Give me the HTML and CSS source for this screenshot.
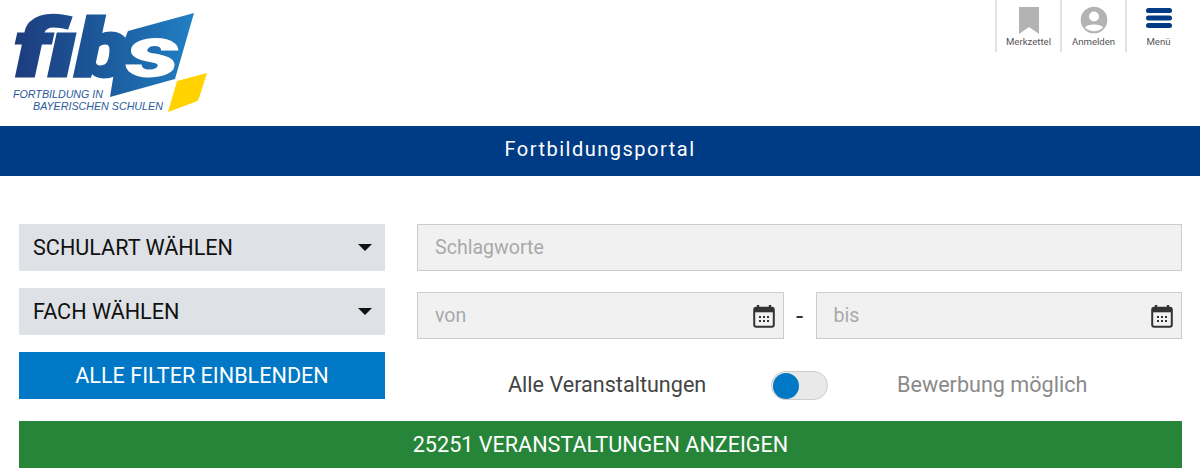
FILE: index.html
```html
<!DOCTYPE html>
<html lang="de">
<head>
    <meta charset="UTF-8">
    <meta name="viewport" content="width=device-width, initial-scale=1.0">
    <title>Fortbildungsportal</title>
    <link rel="stylesheet" href="styles.css">
</head>
<body>
    <header class="header">
        <a class="logo" href="#">
            <svg class="logo-mark" width="210" height="126" viewBox="0 0 210 126">
                <defs>
                    <linearGradient id="logo-blue" gradientUnits="userSpaceOnUse" x1="15" y1="0" x2="194" y2="0">
                        <stop offset="0" stop-color="#1d3c7e"/>
                        <stop offset="0.5" stop-color="#1c5a9c"/>
                        <stop offset="1" stop-color="#2180c4"/>
                    </linearGradient>
                </defs>
                <path d="M128 31 194 13 175 79 110 97 116 60Z" fill="url(#logo-blue)"/>
                <path d="M177 81 207 73 199 98Q198 101 195 102L168 112Z" fill="#ffd200"/>
                <text class="logo-letters" x="14" y="76" textLength="116" lengthAdjust="spacingAndGlyphs" fill="url(#logo-blue)" stroke="url(#logo-blue)">fib</text>
                <text class="logo-s" x="126" y="77" textLength="54" lengthAdjust="spacingAndGlyphs">s</text>
                <text class="logo-tag" x="13" y="98" fill="#2a5a9a">FORTBILDUNG IN</text>
                <text class="logo-tag" x="33" y="110" fill="#2a5a9a">BAYERISCHEN SCHULEN</text>
            </svg>
        </a>
        <nav class="tools">
            <a class="tool" href="#">
                <svg width="22" height="28" viewBox="0 0 22 28"><path d="M1 2H21V29L11 22 1 29Z" fill="#b3b3b3"/></svg>
                <span>Merkzettel</span>
            </a>
            <a class="tool" href="#">
                <svg width="28" height="28" viewBox="0 0 28 28">
                    <circle cx="14" cy="15" r="13.3" fill="#b3b3b3"/>
                    <circle cx="14" cy="11.5" r="5" fill="#fff"/>
                    <path d="M5 22.5C7 18.5 21 18.5 23 22.5 18 27.5 10 27.5 5 22.5Z" fill="#fff"/>
                </svg>
                <span>Anmelden</span>
            </a>
            <a class="tool tool-menu" href="#">
                <svg width="28" height="28" viewBox="0 0 28 28">
                    <rect x="1" y="3" width="26" height="5" rx="2.5" fill="#003c85"/>
                    <rect x="1" y="10.5" width="26" height="5" rx="2.5" fill="#003c85"/>
                    <rect x="1" y="18" width="26" height="5" rx="2.5" fill="#003c85"/>
                </svg>
                <span>Menü</span>
            </a>
        </nav>
    </header>

    <div class="title-bar">Fortbildungsportal</div>

    <main class="search">
        <div class="filters">
            <div class="select"><span>SCHULART WÄHLEN</span><i class="caret"></i></div>
            <div class="select"><span>FACH WÄHLEN</span><i class="caret"></i></div>
            <button class="btn btn-blue">ALLE FILTER EINBLENDEN</button>
        </div>
        <div class="fields">
            <div class="field">Schlagworte</div>
            <div class="dates">
                <div class="field field-date">von
                    <svg class="cal" width="22" height="24" viewBox="0 0 22 24">
                        <path d="M5 1v4M17 1v4" stroke="#333" stroke-width="2.4"/>
                        <rect x="1.2" y="3.7" width="19.6" height="19" rx="2" fill="none" stroke="#333" stroke-width="2"/>
                        <rect x="1.2" y="3.7" width="19.6" height="4.6" fill="#333"/>
                        <path d="M6 12h2v2H6zM10 12h2v2h-2zM14 12h2v2h-2zM6 16h2v2H6zM10 16h2v2h-2zM14 16h2v2h-2z" fill="#333"/>
                    </svg>
                </div>
                <span class="dash">-</span>
                <div class="field field-date">bis
                    <svg class="cal" width="22" height="24" viewBox="0 0 22 24">
                        <path d="M5 1v4M17 1v4" stroke="#333" stroke-width="2.4"/>
                        <rect x="1.2" y="3.7" width="19.6" height="19" rx="2" fill="none" stroke="#333" stroke-width="2"/>
                        <rect x="1.2" y="3.7" width="19.6" height="4.6" fill="#333"/>
                        <path d="M6 12h2v2H6zM10 12h2v2h-2zM14 12h2v2h-2zM6 16h2v2H6zM10 16h2v2h-2zM14 16h2v2h-2z" fill="#333"/>
                    </svg>
                </div>
            </div>
            <div class="switch-row">
                <span class="switch-on">Alle Veranstaltungen</span>
                <span class="switch"><i class="knob"></i></span>
                <span class="switch-off">Bewerbung möglich</span>
            </div>
        </div>
        <button class="btn btn-green">25251 VERANSTALTUNGEN ANZEIGEN</button>
    </main>
</body>
</html>
```

FILE: styles.css
```css
body {
    font-family: Roboto, "Liberation Sans", sans-serif;
    margin: 0;
    padding: 0;
    background-color: #fff;
    color: #212529;
    overflow: hidden;
}

.header {
    display: flex;
    justify-content: space-between;
    height: 126px;
}

.logo-mark {
    display: block;
}

.logo-letters {
    font-size: 80px;
    font-weight: 900;
    font-style: italic;
    stroke-width: 3px;
}

.logo-s {
    font-size: 72px;
    font-weight: 900;
    font-style: italic;
    fill: #fff;
}

.logo-tag {
    font-family: "Liberation Sans", sans-serif;
    font-size: 10.7px;
    font-style: italic;
}

.tools {
    display: flex;
    align-items: flex-start;
    padding-right: 10px;
}

.tool {
    display: flex;
    flex-direction: column;
    align-items: center;
    box-sizing: border-box;
    width: 65px;
    height: 52px;
    padding-top: 5px;
    border-left: 2px solid #e2e2e2;
    color: #555;
    font-size: 9.6px;
    text-decoration: none;
}

.tool svg {
    display: block;
    margin-bottom: 3px;
    overflow: visible;
}

.title-bar {
    height: 50px;
    line-height: 47px;
    background-color: #003c85;
    color: #fff;
    font-size: 20px;
    letter-spacing: 1.5px;
    text-align: center;
}

.search {
    display: grid;
    grid-template-columns: 366px 765px;
    column-gap: 32px;
    row-gap: 21px;
    padding: 48px 18px 0 19px;
}

.filters {
    display: flex;
    flex-direction: column;
    gap: 17px;
}

.select {
    display: flex;
    justify-content: space-between;
    align-items: center;
    box-sizing: border-box;
    height: 47px;
    padding: 0 13px 0 14px;
    background-color: #dee1e6;
    color: #111;
    font-size: 21.6px;
}

.caret {
    width: 0;
    height: 0;
    border-left: 7px solid transparent;
    border-right: 7px solid transparent;
    border-top: 7px solid #111;
}

.btn {
    height: 47px;
    padding: 0;
    border: none;
    color: #fff;
    font-family: inherit;
    font-size: 21.6px;
    cursor: pointer;
}

.btn-blue {
    background-color: #0078c5;
}

.btn-green {
    grid-column: 1 / 3;
    background-color: #27853a;
}

.fields {
    display: flex;
    flex-direction: column;
    gap: 21px;
}

.field {
    box-sizing: border-box;
    display: flex;
    justify-content: space-between;
    align-items: center;
    height: 47px;
    padding: 0 8px 0 17px;
    border: 1px solid #ccc;
    background-color: #f1f1f1;
    color: #a9a9a9;
    font-size: 19.6px;
}

.dates {
    display: flex;
    align-items: center;
}

.field-date {
    flex: 1;
}

.dash {
    width: 32px;
    color: #333;
    font-size: 26px;
    text-align: center;
}

.switch-row {
    display: flex;
    align-items: center;
    margin-top: 11px;
    font-size: 21.6px;
    line-height: 27px;
}

.switch-on {
    width: 263px;
    padding-left: 91px;
    padding-bottom: 2px;
    color: #444;
    white-space: nowrap;
}

.switch {
    display: block;
    box-sizing: border-box;
    width: 57px;
    height: 29px;
    padding: 1px 0 0 1px;
    border: 1px solid #ccc;
    border-radius: 15px;
    background-color: #e9e9e9;
}

.knob {
    display: block;
    width: 26px;
    height: 26px;
    border-radius: 50%;
    background-color: #0078c5;
}

.switch-off {
    margin-left: 69px;
    padding-bottom: 2px;
    color: #8a8a8a;
}
```
